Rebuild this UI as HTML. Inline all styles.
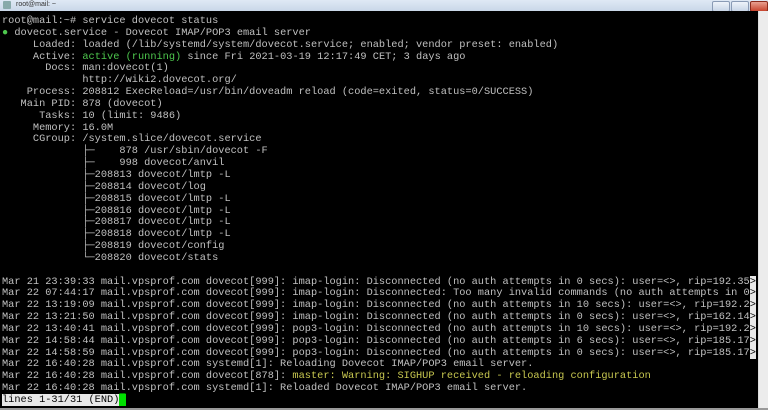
<!DOCTYPE html>
<html><head><meta charset="utf-8"><style>
html,body{margin:0;padding:0;width:768px;height:410px;overflow:hidden;background:#000}
.title{position:absolute;left:0;top:0;width:768px;height:11px;background:linear-gradient(#dfe9f5,#c9d7e8);font:7px "Liberation Sans",sans-serif;color:#333}
.title span{position:absolute;left:16px;top:1px}
.ico{position:absolute;left:3px;top:1px;width:8px;height:8px;background:#8aa;border-radius:1px}
.btn{position:absolute;top:1px;height:9px;border:1px solid #8a9bb5;border-radius:2px;background:linear-gradient(#eef3fa,#c8d5e6)}
.close{background:linear-gradient(#e8a090,#c8452e);border-color:#8b2b1c}
.term{position:absolute;left:0;top:11px;width:758px;height:397px;background:#000}
pre{margin:0;position:absolute;left:2px;top:5px;font:10.3px/11.85px "Liberation Mono",monospace;color:#c0c0c0;white-space:pre}
.g{color:#4ec84e}.y{color:#c8c850}
.inv{background:#e8e8e8;color:#000}
.cur{background:#00e000;color:#00e000}
.sb{position:absolute;left:758px;top:11px;width:10px;height:397px;background:#ececec;border-left:1px solid #ddd}
.bot{position:absolute;left:0;top:408px;width:768px;height:2px;background:#999}
</style></head><body>
<div class="title"><div class="ico"></div><span>root@mail: ~</span>
<div class="btn" style="left:712px;width:16px"></div>
<div class="btn" style="left:731px;width:16px"></div>
<div class="btn close" style="left:750px;width:16px"></div></div>
<div class="term"><pre>root@mail:~# service dovecot status
<span class="g">●</span> dovecot.service - Dovecot IMAP/POP3 email server
     Loaded: loaded (/lib/systemd/system/dovecot.service; enabled; vendor preset: enabled)
     Active: <span class="g">active (running)</span> since Fri 2021-03-19 12:17:49 CET; 3 days ago
       Docs: man:dovecot(1)
             http://wiki2.dovecot.org/
    Process: 208812 ExecReload=/usr/bin/doveadm reload (code=exited, status=0/SUCCESS)
   Main PID: 878 (dovecot)
      Tasks: 10 (limit: 9486)
     Memory: 16.0M
     CGroup: /system.slice/dovecot.service
             ├─    878 /usr/sbin/dovecot -F
             ├─    998 dovecot/anvil
             ├─208813 dovecot/lmtp -L
             ├─208814 dovecot/log
             ├─208815 dovecot/lmtp -L
             ├─208816 dovecot/lmtp -L
             ├─208817 dovecot/lmtp -L
             ├─208818 dovecot/lmtp -L
             ├─208819 dovecot/config
             └─208820 dovecot/stats

Mar 21 23:39:33 mail.vpsprof.com dovecot[999]: imap-login: Disconnected (no auth attempts in 0 secs): user=&lt;&gt;, rip=192.35<span class="inv">&gt;</span>
Mar 22 07:44:17 mail.vpsprof.com dovecot[999]: imap-login: Disconnected: Too many invalid commands (no auth attempts in 0<span class="inv">&gt;</span>
Mar 22 13:19:09 mail.vpsprof.com dovecot[999]: imap-login: Disconnected (no auth attempts in 10 secs): user=&lt;&gt;, rip=192.2<span class="inv">&gt;</span>
Mar 22 13:21:50 mail.vpsprof.com dovecot[999]: imap-login: Disconnected (no auth attempts in 0 secs): user=&lt;&gt;, rip=162.14<span class="inv">&gt;</span>
Mar 22 13:40:41 mail.vpsprof.com dovecot[999]: pop3-login: Disconnected (no auth attempts in 10 secs): user=&lt;&gt;, rip=192.2<span class="inv">&gt;</span>
Mar 22 14:58:44 mail.vpsprof.com dovecot[999]: pop3-login: Disconnected (no auth attempts in 6 secs): user=&lt;&gt;, rip=185.17<span class="inv">&gt;</span>
Mar 22 14:58:59 mail.vpsprof.com dovecot[999]: pop3-login: Disconnected (no auth attempts in 0 secs): user=&lt;&gt;, rip=185.17<span class="inv">&gt;</span>
Mar 22 16:40:28 mail.vpsprof.com systemd[1]: Reloading Dovecot IMAP/POP3 email server.
Mar 22 16:40:28 mail.vpsprof.com dovecot[878]: <span class="y">master: Warning: SIGHUP received - reloading configuration</span>
Mar 22 16:40:28 mail.vpsprof.com systemd[1]: Reloaded Dovecot IMAP/POP3 email server.
<span class="inv">lines 1-31/31 (END)</span><span class="cur">█</span></pre></div>
<div class="sb"></div>
<div class="bot"></div>
</body></html>
